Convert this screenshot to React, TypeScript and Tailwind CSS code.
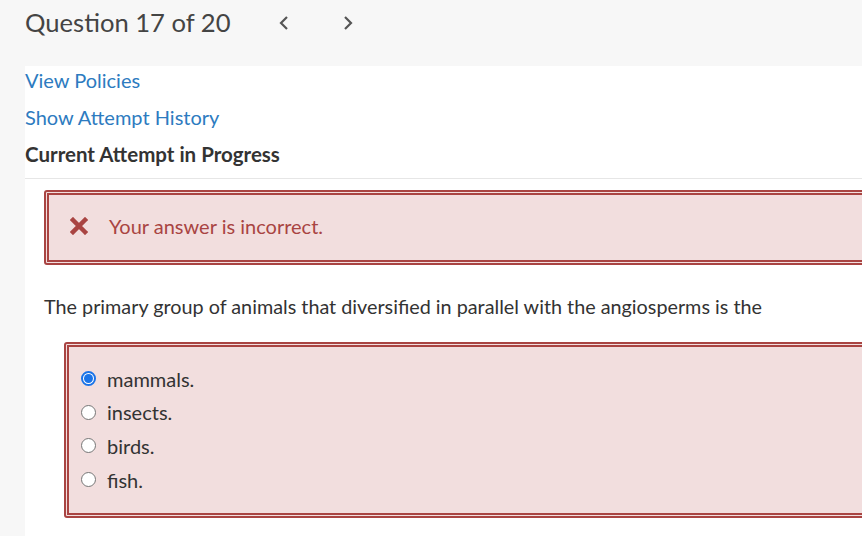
import React from "react";

const options = ["mammals.", "insects.", "birds.", "fish."];

const Radio: React.FC<{ checked?: boolean }> = ({ checked }) =>
    checked ? (
        <span className="w-[15px] h-[15px] rounded-full border-2 border-[#1a73e8] bg-white flex items-center justify-center">
            <span className="w-[9px] h-[9px] rounded-full bg-[#1a73e8]" />
        </span>
    ) : (
        <span className="w-[15px] h-[15px] rounded-full border border-[#767676] bg-white" />
    );

const App: React.FC = () => {
    return (
        <div className="w-[862px] h-[536px] overflow-hidden bg-[#f7f7f7] font-['Lato',sans-serif]">
            <div className="h-[66px] flex items-center pl-[25px] pb-[20px]">
                <h1 className="text-[25.6px] text-[#444] leading-none">Question 17 of 20</h1>
                <svg className="ml-[48px]" width="12" height="16" viewBox="0 0 12 16" fill="none" stroke="#555" strokeWidth="2.2">
                    <path d="M9 2 L3 8 L9 14" />
                </svg>
                <svg className="ml-[52px]" width="12" height="16" viewBox="0 0 12 16" fill="none" stroke="#555" strokeWidth="2.2">
                    <path d="M3 2 L9 8 L3 14" />
                </svg>
            </div>
            <div className="ml-[25px] bg-white h-full">
                <div className="pt-[1px] flex flex-col">
                    <a href="#" className="text-[20px] text-[#2d7bc0] leading-[26px]">View Policies</a>
                    <a href="#" className="mt-[11px] text-[20px] text-[#2d7bc0] leading-[26px]">Show Attempt History</a>
                    <p className="mt-[11px] text-[20.5px] font-bold text-[#333] leading-[26px]">Current Attempt in Progress</p>
                </div>
                <div className="mt-[11px] border-t border-[#e6e6e6]" />
                <div className="ml-[19px] mt-[11px] w-[860px] h-[75px] border-[5px] border-double border-[#a94442] rounded-[3px] bg-[#f2dede] flex items-center pl-[21px] pb-[3px]">
                    <svg width="18" height="18" viewBox="0 0 18 18">
                        <path d="M3 3 L15 15 M15 3 L3 15" stroke="#a94442" strokeWidth="4.5" strokeLinecap="square" />
                    </svg>
                    <span className="ml-[21px] text-[20px] text-[#a94442]">Your answer is incorrect.</span>
                </div>
                <p className="ml-[19px] mt-[28px] text-[19.8px] text-[#333] leading-[26px]">
                    The primary group of animals that diversified in parallel with the angiosperms is the
                </p>
                <div className="ml-[39px] mt-[23px] w-[860px] h-[176px] border-[5px] border-double border-[#a94442] rounded-[3px] bg-[#f2dede] pl-[12px] pt-[15px]">
                    {options.map((o, i) => (
                        <label key={o} className="flex items-center h-[33.6px]">
                            <Radio checked={i === 0} />
                            <span className="ml-[11px] text-[20px] text-[#333] leading-[26px]">{o}</span>
                        </label>
                    ))}
                </div>
            </div>
        </div>
    );
};

export default App;
